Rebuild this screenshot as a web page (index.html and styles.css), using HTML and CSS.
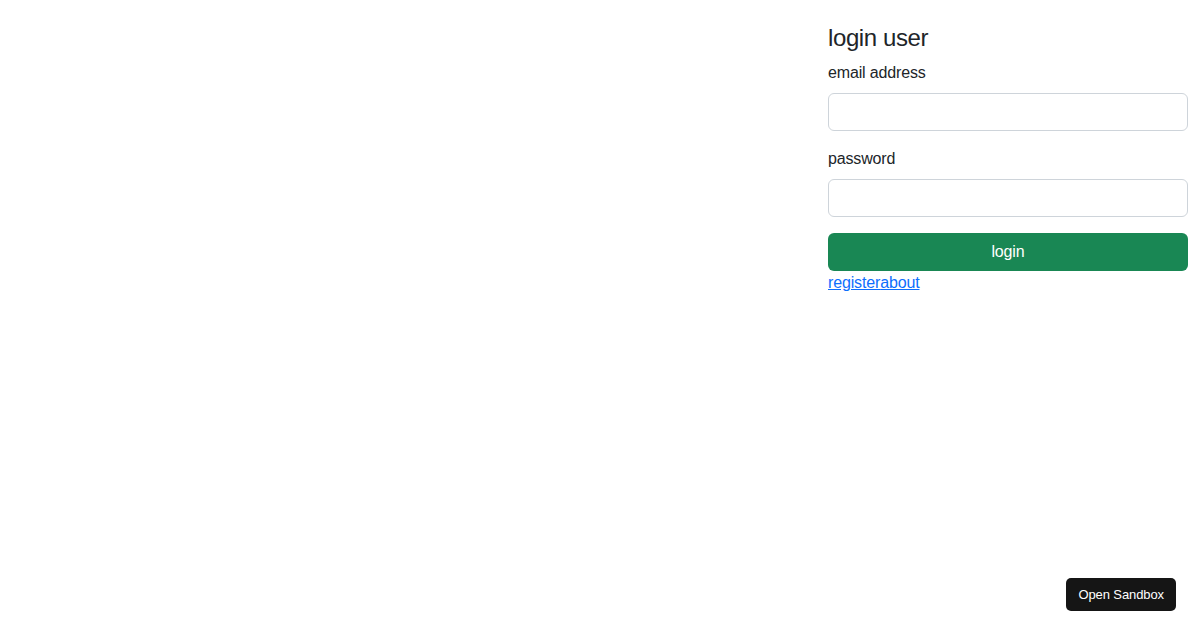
FILE: index.html
```html
<!DOCTYPE html>
<html lang="en">
<head>
  <meta charset="UTF-8">
  <title>login user</title>
  <link rel="stylesheet" href="styles.css">
</head>
<body>
  <div class="page">
    <form class="login-form">
      <h4>login user</h4>
      <div class="field">
        <label for="email">email address</label>
        <input type="email" id="email">
      </div>
      <div class="field">
        <label for="password">password</label>
        <input type="password" id="password">
      </div>
      <button type="submit" class="btn-login">login</button>
      <div class="links"><a href="#">register</a><a href="#">about</a></div>
    </form>
  </div>

  <a class="sandbox-btn" href="#">Open Sandbox</a>
</body>
</html>
```

FILE: styles.css
```css
* {
  box-sizing: border-box;
}
body {
  margin: 0;
  font-family: "Liberation Sans", Arial, sans-serif;
  font-size: 16px;
  line-height: 1.5;
  letter-spacing: -0.15px;
  color: #212529;
  background: #fff;
}
.page {
  display: flex;
  justify-content: flex-end;
  padding: 24px 12px;
}
.login-form {
  width: 360px;
}
h4 {
  margin: 0 0 8px;
  font-size: 24px;
  font-weight: 500;
  line-height: 1.2;
  letter-spacing: -0.4px;
}
.field {
  margin-bottom: 16px;
}
label {
  display: block;
  margin-bottom: 8px;
}
input {
  display: block;
  width: 100%;
  height: 38px;
  padding: 6px 12px;
  font-size: 16px;
  border: 1px solid #ced4da;
  border-radius: 6px;
}
.btn-login {
  display: block;
  width: 100%;
  height: 38px;
  border: none;
  border-radius: 6px;
  background-color: #198754;
  color: #fff;
  font-family: inherit;
  font-size: 16px;
  letter-spacing: inherit;
  cursor: pointer;
}
.links a {
  color: #0d6efd;
}
.sandbox-btn {
  position: fixed;
  right: 24px;
  bottom: 19px;
  padding: 8px 12px;
  background: #151515;
  color: #fff;
  border-radius: 5px;
  font-size: 13px;
  line-height: 17px;
  letter-spacing: -0.1px;
  text-decoration: none;
}
```
